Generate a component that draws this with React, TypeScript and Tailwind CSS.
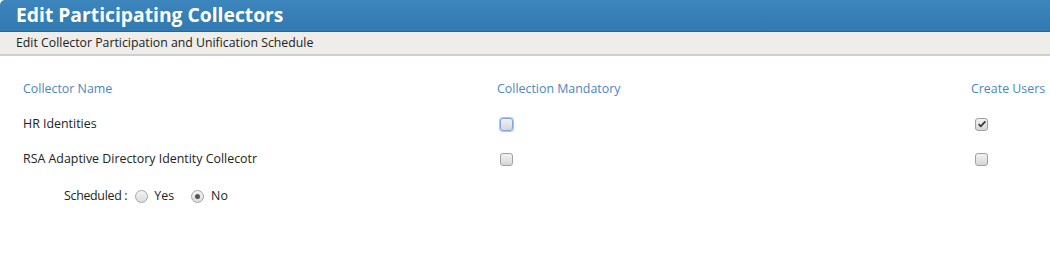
import React from 'react'

function Box({ checked = false, focus = false }: { checked?: boolean; focus?: boolean }) {
  return (
    <span
      className={
        'relative inline-flex size-[13px] items-center justify-center rounded-[3px] border bg-gradient-to-b from-[#f2f2f2] to-[#d6d6d6] ' +
        (focus ? 'border-[#7fa7e6] shadow-[0_0_0_1px_#a9c5f0]' : 'border-[#a0a0a0]')
      }
    >
      {checked && (
        <svg viewBox="0 0 12 12" className="size-[10px]">
          <path d="M2 6.2 L4.6 8.8 L10 2.8" fill="none" stroke="#333" strokeWidth="2" />
        </svg>
      )}
    </span>
  )
}

function Radio({ checked = false }: { checked?: boolean }) {
  return (
    <span className="inline-flex size-[13px] items-center justify-center rounded-full border border-[#a8a8a8] bg-gradient-to-b from-[#f4f4f4] to-[#dadada]">
      {checked && <span className="size-[5px] rounded-full bg-[#555]" />}
    </span>
  )
}

export default function App() {
  return (
    <div className="h-[267px] w-[1050px] bg-white font-['Open_Sans',sans-serif] text-[#222]">
      {/* Title bar */}
      <div className="flex h-[32px] items-center rounded-tl-[5px] border-b border-[#3d6c3a] bg-gradient-to-b from-[#3c86bd] to-[#3079b1] pl-4">
        <h1 className="text-[19.3px] font-bold text-white">Edit Participating Collectors</h1>
      </div>
      <div className="flex h-[24px] items-center border-b-2 border-[#cfcfcf] bg-[#eeede9] pl-4 text-[12.3px] text-[#222]">
        Edit Collector Participation and Unification Schedule
      </div>

      <div className="pl-[23px] pt-[23px] text-[12.4px]">
        <div className="flex h-[20px] items-center text-[#4a86c8]">
          <div className="w-[474px]">Collector Name</div>
          <div className="w-[474px]">Collection Mandatory</div>
          <div>Create Users</div>
        </div>
        <div className="mt-[15px] flex h-[20px] items-center">
          <div className="w-[474px]">HR Identities</div>
          <div className="flex w-[474px] pl-[3px]">
            <Box focus />
          </div>
          <div className="flex pl-[4px]">
            <Box checked />
          </div>
        </div>
        <div className="mt-[15px] flex h-[20px] items-center">
          <div className="w-[474px]">RSA Adaptive Directory Identity Collecotr</div>
          <div className="flex w-[474px] pl-[3px]">
            <Box />
          </div>
          <div className="flex pl-[4px]">
            <Box />
          </div>
        </div>
        <div className="mt-[17px] flex h-[20px] items-center pl-[41px]">
          <span className="tracking-[-0.3px]">Scheduled :</span>
          <span className="ml-[8px] flex"><Radio /></span>
          <span className="ml-[6px]">Yes</span>
          <span className="ml-[17px] flex"><Radio checked /></span>
          <span className="ml-[7px]">No</span>
        </div>
      </div>
    </div>
  )
}
